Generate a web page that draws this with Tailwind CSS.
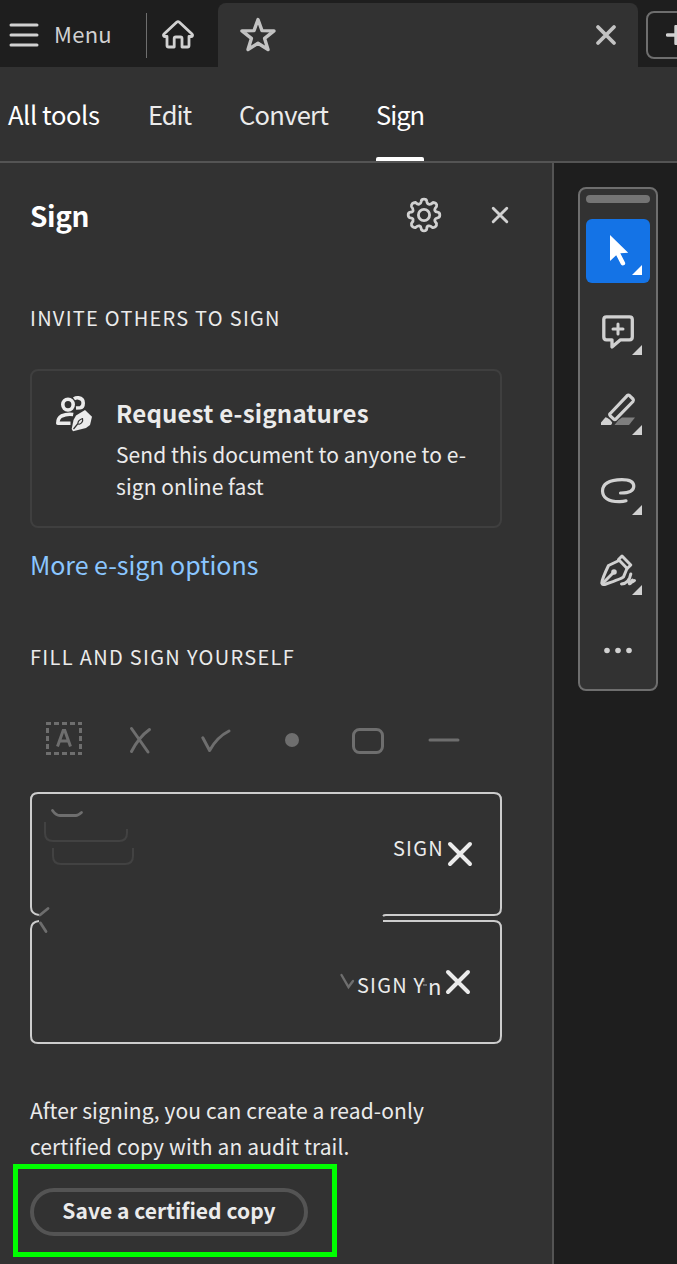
<!DOCTYPE html>
<html lang="en">
  <head>
    <meta charset="UTF-8" />
    <meta name="viewport" content="width=device-width, initial-scale=1.0" />
    <title>Sign</title>
    <script src="https://cdn.jsdelivr.net/npm/@tailwindcss/browser@4"></script>
  </head>
  <body
    class="bg-[#323232] h-[1264px] w-[677px] overflow-hidden flex flex-col whitespace-nowrap text-[#ebebeb] font-['Noto_Sans_CJK_SC','Noto_Sans',sans-serif]"
  >
    <!-- Title bar -->
    <header class="flex h-[67px] shrink-0 bg-[#1e1e1e] text-[#d1d1d1]">
      <div class="flex w-[218px] shrink-0 items-center pt-[3px]">
        <svg class="ml-[9px] h-6 w-[30px]" viewBox="0 0 30 24" fill="none" stroke="currentColor" stroke-width="3" stroke-linecap="round">
          <path d="M2 2H28M2 12H28M2 22H28" />
        </svg>
        <span class="mb-1 ml-[15px] w-[92px] text-[22px] leading-8 tracking-[0.3px]">Menu</span>
        <div class="h-[45px] w-px bg-[#6e6e6e]"></div>
        <svg class="ml-[14px] h-8 w-[34px]" viewBox="0 0 34 32" fill="none" stroke="currentColor" stroke-width="2.8" stroke-linejoin="round" stroke-linecap="round">
          <path d="M6 17.5H3.8C2.4 17.5 2 16 3 15L15.6 3.2Q17 2 18.4 3.2L31 15C32 16 31.6 17.5 30.4 17.5H28V26.5Q28 28 26.5 28H21V19.5Q21 18 19.5 18H14.8Q13.2 18 13.2 19.5V28H7.6Q6 28 6 26.5Z" />
        </svg>
      </div>
      <div class="mt-[3px] flex w-[420px] shrink-0 items-center justify-between rounded-t-lg bg-[#323232] pl-[22px] pr-[21px] text-[#c3c3c3]">
        <svg class="h-9 w-9" viewBox="0 0 36 36" fill="none" stroke="currentColor" stroke-width="3.4" stroke-linejoin="round">
          <path d="M18 2.5L22 13.6L34 13.9L24.6 21.4L28 32.5L18 26.2L8 32.5L11.4 21.4L2 13.9L14 13.6Z" />
        </svg>
        <svg class="h-[22px] w-[22px]" viewBox="0 0 22 22" fill="none" stroke="currentColor" stroke-width="3.8" stroke-linecap="round">
          <path d="M3 3L19 19M19 3L3 19" />
        </svg>
      </div>
      <div class="ml-2 mt-[11px] flex h-12 w-12 shrink-0 items-center rounded-lg border-2 border-[#6e6e6e] pl-[18px]">
        <svg class="h-5 w-5 shrink-0" viewBox="0 0 20 20" fill="none" stroke="currentColor" stroke-width="3.4" stroke-linecap="round">
          <path d="M1.5 10H18.5M10 1.5V18.5" />
        </svg>
      </div>
    </header>

    <!-- Tool tabs -->
    <nav class="flex h-24 shrink-0 border-b-2 border-[#545454] pl-2 text-[25.5px] leading-[94px] tracking-[-1px]">
      <span class="w-[140px] tracking-[-0.4px] text-white">All tools</span>
      <span class="w-[91px]">Edit</span>
      <span class="w-[137px] tracking-[-0.7px]">Convert</span>
      <span class="relative w-12 text-white">Sign<i class="absolute bottom-0 left-0 h-1 w-12 rounded-t-xs bg-white"></i></span>
    </nav>

    <main class="flex flex-1">
      <section class="w-[554px] shrink-0 border-r-2 border-[#545454] pl-[30px]">
        <div class="mt-[30px] flex h-11 items-center">
          <h1 class="w-[376px] text-[28px] font-bold leading-10 tracking-[-0.4px] text-white">Sign</h1>
          <svg class="h-9 w-9 text-[#d1d1d1]" viewBox="-18 -18 36 36" fill="none" stroke="currentColor" stroke-width="2.8" stroke-linejoin="round">
            <circle r="5.6" />
            <path d="M-2.8 -13.6Q-2.6 -15.8 0 -15.8T2.8 -13.6Q3.2 -10.9 5.2 -10.7T9 -12.5Q10.9 -12.5 12 -11.4T12.5 -8.4Q10.2 -6 10.9 -4.4T13.6 -2.8Q15.8 -2.6 15.8 0T13.6 2.8Q11.4 3.2 10.9 4.6T12.5 8.4Q12.8 10.4 11.6 11.6T8.4 12.5Q6.2 10.4 4.4 10.9T2.8 13.6Q2.6 15.8 0 15.8T-2.8 13.6Q-3 11.4 -4.6 10.9T-8.4 12.5Q-10.4 12.8 -11.6 11.6T-12.5 8.4Q-10.4 6 -10.9 4.4T-13.6 2.8Q-15.8 2.4 -15.8 0T-13.6 -2.8Q-11.2 -3 -10.9 -4.6T-12.5 -8.4Q-12.8 -10.2 -11.6 -11.4T-8.4 -12.5Q-6.4 -10.4 -4.8 -10.8T-2.8 -13.6Z" />
          </svg>
          <svg class="ml-[49px] h-[18px] w-[18px] text-[#d1d1d1]" viewBox="0 0 18 18" fill="none" stroke="currentColor" stroke-width="2.9" stroke-linecap="round">
            <path d="M2.2 2.2L15.8 15.8M15.8 2.2L2.2 15.8" />
          </svg>
        </div>

        <h2 class="mt-[67px] text-[20px] leading-7 tracking-[1.27px]">INVITE OTHERS TO SIGN</h2>

        <div class="mt-[37px] flex h-[159px] w-[472px] rounded-lg border-2 border-[#3f3f3f]">
          <svg class="ml-6 mt-[25px] h-9 w-9 shrink-0" viewBox="0 0 36 36" fill="none" stroke="currentColor" stroke-width="3.6" stroke-linejoin="round">
            <ellipse cx="12" cy="8.6" rx="5.2" ry="5.4" />
            <path d="M18 2.9Q20 1.5 22.5 1.9Q27.2 2.6 27.2 7T24 11.8L20 12" />
            <path d="M17.2 18.5Q11 17.5 5.5 20Q1.8 22 1.8 27.2H14.5" />
            <path d="M29 14L36 20.8L34 29L30 32L17 35.2L15.7 33L17.5 24L20 19.5Z" fill="currentColor" stroke="none" />
            <path d="M17.5 33L22 27.5Q21.5 24.5 26.5 22.5Q27.5 27 22.5 28.5" stroke="#323232" stroke-width="1.2" />
          </svg>
          <div class="ml-6">
            <h3 class="mt-[26px] text-[24px] font-bold leading-8 tracking-[0.2px]">Request e-signatures</h3>
            <p class="mt-[9px] text-[21px] leading-8 tracking-[0.06px]">Send this document to anyone to e-<br />sign online fast</p>
          </div>
        </div>

        <a href="#" class="mt-5 block text-[25px] leading-8 tracking-[-0.05px] text-[#8ac6ff]">More e-sign options</a>

        <h2 class="mt-[63px] text-[20px] leading-7 tracking-[1.32px]">FILL AND SIGN YOURSELF</h2>

        <!-- Fill tools -->
        <div class="mt-[49px] flex h-10 w-[472px] pl-4 text-[#6e6e6e]">
          <svg class="h-10 w-[76px]" viewBox="0 0 76 40" fill="none" stroke="currentColor" stroke-width="3">
            <path d="M0 3.5H36M0 33.5H36" stroke-dasharray="5 3" />
            <path d="M1.5 8V30M34.5 8V30" stroke-dasharray="5 3" />
            <path d="M11.5 26.5L17.2 10.5H18.8L24.5 26.5M13.4 21H22.6" />
          </svg>
          <svg class="h-10 w-[76px]" viewBox="0 0 76 40" fill="none" stroke="currentColor" stroke-width="3" stroke-linecap="round">
            <path d="M9.5 8.5L26 32M27.5 9.5Q17 17 9.5 31.5" />
          </svg>
          <svg class="h-10 w-[76px]" viewBox="0 0 76 40" fill="none" stroke="currentColor" stroke-width="3" stroke-linecap="round" stroke-linejoin="round">
            <path d="M4.8 17.8L11.6 30.5Q19 17 31 11" />
          </svg>
          <svg class="h-10 w-[76px]" viewBox="0 0 76 40" fill="currentColor">
            <circle cx="18" cy="20" r="7" />
          </svg>
          <svg class="h-10 w-[76px]" viewBox="0 0 76 40" fill="none" stroke="currentColor" stroke-width="3">
            <rect x="3.5" y="9.5" width="29" height="23" rx="6" />
          </svg>
          <svg class="h-10 w-[76px]" viewBox="0 0 76 40" fill="none" stroke="currentColor" stroke-width="3" stroke-linecap="round">
            <path d="M4 20H32" />
          </svg>
        </div>

        <!-- Saved signatures -->
        <div class="relative mt-8 h-[252px] w-[472px]">
          <svg class="absolute inset-0" width="472" height="252" viewBox="0 0 472 252" fill="none" stroke="#cdcdcd" stroke-width="2">
            <path d="M9 123Q1 122 1 115V8Q1 1 8 1H464Q471 1 471 8V116Q471 123 464 123H356Q354 123 353 124" />
            <path d="M9 129Q1 130 1 137V244Q1 251 8 251H464Q471 251 471 244V136Q471 129 464 129H353" />
            <g stroke="#424242">
              <path d="M15 30V41Q15 49 23 49H89Q97 49 97 41V37" />
              <path d="M23 56V64Q23 72 31 72H95Q103 72 103 64V56" />
            </g>
            <g stroke="#6e6e6e" stroke-linecap="round" stroke-width="2.8">
              <path d="M22.5 18.5Q26 23.5 30 23.5H46Q48 23.5 51.5 20.5" />
              <path d="M18 116.5L10 123M10.5 131L16 139.5" />
              <path d="M311.5 183L318.5 195L323 189" stroke-width="2.4" />
            </g>
            <path d="M393.5 187V190M393 193H397" stroke="#6e6e6e" />
          </svg>
          <div class="relative flex h-[128px] items-center pl-[363px]">
            <span class="mb-[17px] w-[53px] text-[20px] leading-7 tracking-[1.2px]">SIGN</span>
            <svg class="mb-1 h-7 w-7" viewBox="0 0 28 28" fill="none" stroke="currentColor" stroke-width="4" stroke-linecap="round">
              <path d="M4 4L24 24M24 4L4 24" />
            </svg>
          </div>
          <div class="relative flex h-[124px] items-center pl-[327px]">
            <span class="mt-[5px] w-[71px] text-[20px] leading-7 tracking-[1.2px]">SIGN Y</span>
            <span class="mt-[5px] w-4 text-[22px] leading-7">n</span>
            <svg class="h-7 w-7" viewBox="0 0 28 28" fill="none" stroke="currentColor" stroke-width="4" stroke-linecap="round">
              <path d="M4 4L24 24M24 4L4 24" />
            </svg>
          </div>
        </div>

        <p class="mt-12 text-[21px] leading-9 tracking-[0.12px]">After signing, you can create a read-only<br />certified copy with an audit trail.</p>

        <div class="-ml-[17px] h-[93px] w-[324px] border-5 border-[#00ff00] pl-3 pt-[19px]">
          <button class="h-12 w-[278px] rounded-full border-4 border-[#545454] pb-1 text-[21px] font-bold leading-9 tracking-[0.05px]">Save a certified copy</button>
        </div>
      </section>

      <!-- Quick tools -->
      <aside class="flex-1 bg-[#1e1e1e] pl-6 pt-6">
        <div class="flex h-[504px] w-20 flex-col items-center rounded-lg border-2 border-[#6e6e6e] bg-[#323232] pt-[6px] text-[#d1d1d1]">
          <div class="h-2 w-16 shrink-0 rounded-full bg-[#747474]"></div>
          <div class="mt-4 flex flex-col gap-4">
            <svg class="h-16 w-16 rounded-md bg-[#1473e6] text-white" viewBox="0 0 64 64" fill="currentColor">
              <path d="M24 16V42L30.2 36.2L35 45.5Q36.5 47 38.2 46T38.8 43L34.3 34.3L42.2 33.8Z" />
              <path d="M56 46V56H46Z" />
            </svg>
            <svg class="h-16 w-16" viewBox="0 0 64 64" fill="none" stroke="currentColor" stroke-width="3.3" stroke-linejoin="round" stroke-linecap="round">
              <path d="M20.5 17.8H43.5Q46.3 17.8 46.3 20.5V38Q46.3 40.8 43.5 40.8H34.5L26 48V40.8H20.5Q17.8 40.8 17.8 38V20.5Q17.8 17.8 20.5 17.8Z" />
              <path d="M32 25V35M27 30H37" stroke-width="3" />
              <path d="M56 46V56H46Z" fill="currentColor" stroke="none" />
            </svg>
            <svg class="h-16 w-16" viewBox="0 0 64 64" fill="none" stroke="currentColor" stroke-width="3.2" stroke-linejoin="round">
              <path d="M24.3 34.5L41 16.8Q42.3 15.6 43.8 16.8L47 20Q48 21.3 47 22.5L29.8 40.2Q28.8 41 27.8 40.2L24.3 36.8Q23.2 35.6 24.3 34.5Z" />
              <path d="M15 46V43.5L19.5 38.2Q21 38 24 40.8L26.2 43.5Q26.2 45 24.8 46Z" fill="currentColor" stroke="none" />
              <path d="M36 38.5H49L43 46H28.5L32.5 41Z" fill="#7e7e7e" stroke="none" />
              <path d="M56 46V56H46Z" fill="currentColor" stroke="none" />
            </svg>
            <svg class="h-16 w-16" viewBox="0 0 64 64" fill="none" stroke="currentColor" stroke-width="3.2" stroke-linecap="round">
              <path d="M34.5 34Q47.8 34.2 47.8 27Q47.5 20.6 36 20.6Q16.5 21 16.5 32Q17 42.5 33 42.7Q37 42.8 40 41.8" />
              <path d="M56 46V56H46Z" fill="currentColor" stroke="none" />
            </svg>
            <svg class="h-16 w-16" viewBox="0 0 64 64" fill="none" stroke="currentColor" stroke-width="3" stroke-linejoin="round" stroke-linecap="round">
              <path d="M33 21.5L22.5 26.5Q16 40 15.8 44Q16.5 46.5 20 45Q36.5 39.2 37.5 37.8L41 29.5" />
              <path d="M32.5 20.5L41.2 29.5L44.8 26L36 17Z" />
              <path d="M17.5 43.5L28 33" />
              <circle cx="28" cy="33" r="1.3" fill="currentColor" />
              <path d="M35.5 45Q43 44.5 44.8 35Q42 43.5 43.2 44.5T46.5 41Q45.5 44.5 48.5 41.5" />
              <path d="M56 46V56H46Z" fill="currentColor" stroke="none" />
            </svg>
            <svg class="h-16 w-16" viewBox="0 0 64 64" fill="currentColor">
              <circle cx="21" cy="31.5" r="2.8" />
              <circle cx="32" cy="31.5" r="2.8" />
              <circle cx="43" cy="31.5" r="2.8" />
            </svg>
          </div>
        </div>
      </aside>
    </main>
  </body>
</html>
